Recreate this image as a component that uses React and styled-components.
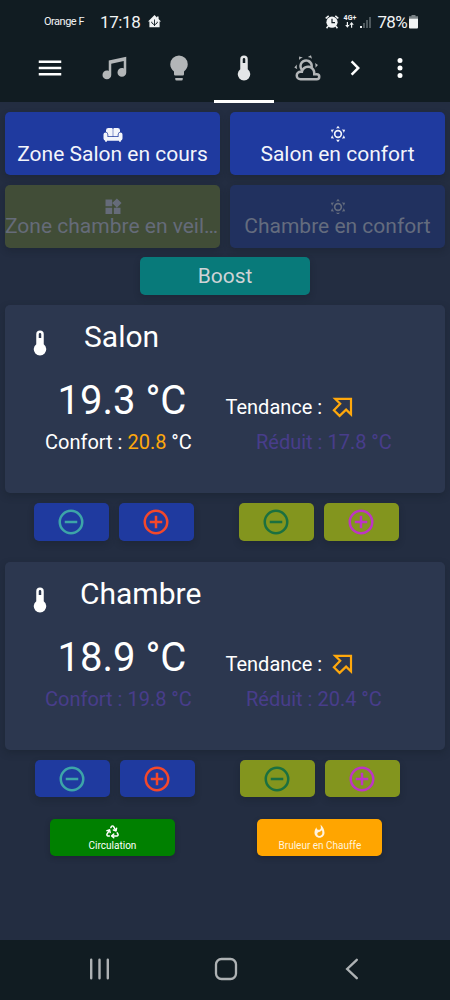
import React from 'react';
import styled, { createGlobalStyle } from 'styled-components';
import { MdWhatshot } from 'react-icons/md';
import { Recycle } from 'lucide-react';

const GlobalStyle = createGlobalStyle`
  * { box-sizing: border-box; }
  body { margin: 0; background: #232d41; font-family: Roboto, "Liberation Sans", sans-serif; }
  svg { display: block; flex: none; }
`;

const paths = {
  thermometer: 'M15 13V5A3 3 0 0 0 9 5V13A5 5 0 1 0 15 13M12 4A1 1 0 0 1 13 5V8H11V5A1 1 0 0 1 12 4Z',
  menu: 'M3,6H21V8H3V6M3,11H21V13H3V11M3,16H21V18H3V16Z',
  music: 'M21,3V15.5A3.5,3.5 0 0,1 17.5,19A3.5,3.5 0 0,1 14,15.5A3.5,3.5 0 0,1 17.5,12C18.04,12 18.55,12.12 19,12.34V6.47L9,8.6V17.5A3.5,3.5 0 0,1 5.5,21A3.5,3.5 0 0,1 2,17.5A3.5,3.5 0 0,1 5.5,14C6.04,14 6.55,14.12 7,14.34V6L21,3Z',
  bulb: 'M12,2A7,7 0 0,0 5,9C5,11.38 6.19,13.47 8,14.74V17A1,1 0 0,0 9,18H15A1,1 0 0,0 16,17V14.74C17.81,13.47 19,11.38 19,9A7,7 0 0,0 12,2M9,21A1,1 0 0,0 10,22H14A1,1 0 0,0 15,21V20H9V21Z',
  weather: 'M12.74,5.47C15.1,6.5 16.35,9.03 15.92,11.46C17.19,12.56 18,14.19 18,16V16.17C18.31,16.06 18.65,16 19,16A3,3 0 0,1 22,19A3,3 0 0,1 19,22H6A4,4 0 0,1 2,18A4,4 0 0,1 6,14H6.27C5,12.45 4.6,10.24 5.5,8.26C6.72,5.5 9.97,4.24 12.74,5.47M11.93,7.3C10.16,6.5 8.09,7.31 7.31,9.07C6.85,10.09 6.93,11.22 7.41,12.13C8.5,10.83 10.16,10 12,10C12.7,10 13.38,10.12 14,10.34C13.94,9.06 13.18,7.86 11.93,7.3M13.55,3.64C13,3.4 12.45,3.23 11.88,3.12L14.37,1.82L15.27,4.71C14.76,4.29 14.19,3.93 13.55,3.64M6.09,4.44C5.6,4.79 5.17,5.19 4.8,5.63L4.91,2.82L7.87,3.5C7.25,3.71 6.65,4.03 6.09,4.44M18,9.71C17.91,9.12 17.78,8.55 17.59,8L19.97,9.5L17.92,11.73C18.03,11.08 18.05,10.4 18,9.71M3.04,11.3C3.11,11.9 3.24,12.47 3.43,13L1.06,11.5L3.1,9.28C3,9.93 2.97,10.61 3.04,11.3M19,18H16V16A4,4 0 0,0 12,12A4,4 0 0,0 8,16H6A2,2 0 0,0 4,18A2,2 0 0,0 6,20H19A1,1 0 0,0 20,19A1,1 0 0,0 19,18Z',
  chevron: 'M8.59,16.58L13.17,12L8.59,7.41L10,6L16,12L10,18L8.59,16.58Z',
  dots: 'M12,16A2,2 0 0,1 14,18A2,2 0 0,1 12,20A2,2 0 0,1 10,18A2,2 0 0,1 12,16M12,10A2,2 0 0,1 14,12A2,2 0 0,1 12,14A2,2 0 0,1 10,12A2,2 0 0,1 12,10M12,4A2,2 0 0,1 14,6A2,2 0 0,1 12,8A2,2 0 0,1 10,6A2,2 0 0,1 12,4Z',
  sofa: 'M6.5,4.7H10A1.6,1.6 0 0,1 11.7,6.3V14.7H6.3V12.2A4,4 0 0,0 3.6,9.2V7.6A2.9,2.9 0 0,1 6.5,4.7M14,4.7H17.5A2.9,2.9 0 0,1 20.4,7.6V9.2A4,4 0 0,0 17.7,12.2V14.7H12.3V6.3A1.6,1.6 0 0,1 14,4.7M3,10.2A2.4,2.4 0 0,1 5.4,12.6V15.5H18.6V12.6A2.4,2.4 0 0,1 23.4,12.6V17.5A2.6,2.6 0 0,1 21.4,20V21.2H19.3V20H4.7V21.2H2.6V20A2.6,2.6 0 0,1 0.6,17.5V12.6A2.4,2.4 0 0,1 3,10.2Z',
  widgets: 'M3,3H11V11H3V3M16.66,1.69L22.31,7.34L16.66,13L11,7.34L16.66,1.69M13,13H21V21H13V13M3,13H11V21H3V13Z',
  sun: 'M12,7A5,5 0 0,1 17,12A5,5 0 0,1 12,17A5,5 0 0,1 7,12A5,5 0 0,1 12,7M12,9A3,3 0 0,0 9,12A3,3 0 0,0 12,15A3,3 0 0,0 15,12A3,3 0 0,0 12,9M12,2L14.39,5.42C13.65,5.15 12.84,5 12,5C11.16,5 10.35,5.15 9.61,5.42L12,2M3.34,7L7.5,6.65C6.9,7.16 6.36,7.78 5.94,8.5C5.5,9.24 5.25,10 5.11,10.79L3.34,7M3.36,17L5.12,13.23C5.26,14 5.53,14.78 5.95,15.5C6.37,16.24 6.91,16.86 7.5,17.37L3.36,17M20.65,7L18.88,10.79C18.74,10 18.47,9.23 18.05,8.5C17.63,7.78 17.1,7.15 16.5,6.64L20.65,7M20.64,17L16.5,17.36C17.09,16.85 17.62,16.22 18.04,15.5C18.46,14.77 18.73,14 18.87,13.21L20.64,17M12,22L9.59,18.56C10.33,18.83 11.14,19 12,19C12.82,19 13.63,18.83 14.37,18.56L12,22Z',
  minus: 'M12,20C7.59,20 4,16.41 4,12C4,7.59 7.59,4 12,4C16.41,4 20,7.59 20,12C20,16.41 16.41,20 12,20M12,2A10,10 0 0,0 2,12A10,10 0 0,0 12,22A10,10 0 0,0 22,12A10,10 0 0,0 12,2M7,13H17V11H7',
  plus: 'M12,20C7.59,20 4,16.41 4,12C4,7.59 7.59,4 12,4C16.41,4 20,7.59 20,12C20,16.41 16.41,20 12,20M12,2A10,10 0 0,0 2,12A10,10 0 0,0 12,22A10,10 0 0,0 22,12A10,10 0 0,0 12,2M13,7H11V11H7V13H11V17H13V13H17V11H13V7Z',
};

const Icon = ({ name, size = 30, color = 'currentColor' }) => (
  <svg width={size} height={size} viewBox="0 0 24 24" fill={color}>
    <path d={paths[name]} />
  </svg>
);

const Screen = styled.div`
  width: 450px;
  height: 1000px;
  display: flex;
  flex-direction: column;
  overflow: hidden;
  background: #232d41;
  color: #fff;
`;

const Header = styled.header`
  height: 102px;
  flex: none;
  background: #111c22;
`;

const StatusBar = styled.div`
  height: 43px;
  padding: 0 32px 0 44px;
  display: flex;
  align-items: center;
  color: #f1f3f4;
`;

const Carrier = styled.span`
  width: 56px;
  font-size: 11px;
  letter-spacing: -0.5px;
  white-space: nowrap;
`;

const Clock = styled.span`
  width: 48px;
  font-size: 17px;
  letter-spacing: -0.4px;
`;

const StatusRight = styled.div`
  margin-left: auto;
  display: flex;
  align-items: center;
`;

const Network = styled.div`
  width: 14px;
  margin-left: 4px;
  display: flex;
  flex-direction: column;
  align-items: center;
  font-size: 7px;
  line-height: 7px;
  font-weight: 700;
`;

const Signal = styled.div`
  margin-left: 3px;
  height: 13px;
  display: flex;
  align-items: flex-end;
  gap: 1.3px;
`;

const SignalBar = styled.i`
  width: 1.9px;
  height: ${(p) => p.$h}px;
  background: ${(p) => (p.$on ? '#f1f3f4' : '#4f595e')};
`;

const Percent = styled.span`
  margin: 0 2px 0 6px;
  font-size: 17px;
  letter-spacing: -0.65px;
`;

const Tabs = styled.nav`
  height: 60px;
  padding-left: 18px;
  display: flex;
`;

const Tab = styled.div`
  width: ${(p) => p.$w || 64.5}px;
  height: 59.5px;
  padding-top: 9.5px;
  display: flex;
  justify-content: center;
  color: ${(p) => (p.$dim ? '#b3b6b8' : '#fff')};
`;

const ActiveTab = styled(Tab)`
  width: 60px;
  margin: 0 2.25px;
  border-bottom: 3px solid #fff;
  color: #e4e6e7;
`;

const Main = styled.main`
  flex: 1;
  padding: 10px 5px 0;
  display: flex;
  flex-direction: column;
`;

const Zones = styled.div`
  display: grid;
  grid-template-columns: 215px 215px;
  grid-auto-rows: 62.75px;
  gap: 10px;
`;

const ZoneButton = styled.div`
  padding-top: 12px;
  border-radius: 5px;
  overflow: hidden;
  display: flex;
  flex-direction: column;
  align-items: center;
  background: ${(p) => p.$bg};
  color: ${(p) => p.$fg || '#f3f5fb'};
  box-shadow: 0 3px 6px rgba(20, 28, 36, 0.3);
`;

const IconClip = styled.div`
  height: 17.6px;
  padding-top: 0.2px;
  flex: none;
  overflow: hidden;
`;

const ZoneLabel = styled.div`
  width: 100%;
  height: 24px;
  font-size: 21px;
  line-height: 24px;
  text-align: center;
  white-space: nowrap;
  overflow: hidden;
  text-overflow: ellipsis;
`;

const Boost = styled.div`
  width: 170px;
  height: 37.5px;
  margin: 9.75px auto 10px;
  padding-top: 1px;
  flex: none;
  border-radius: 5px;
  background: #087a7a;
  color: #cfd3d6;
  font-size: 21px;
  line-height: 37px;
  text-align: center;
  box-shadow: 0 3px 6px rgba(20, 28, 36, 0.3);
`;

const Card = styled.section`
  height: 188px;
  flex: none;
  padding: 12px 0 0 20px;
  border-radius: 5px;
  background: #2c374f;
  box-shadow: 0 3px 7px rgba(20, 28, 36, 0.35);
`;

const CardHead = styled.div`
  height: 40px;
  display: flex;
`;

const CardIcon = styled.div`
  padding-top: 11px;
`;

const Title = styled.h2`
  margin: 0 0 0 ${(p) => p.$gap}px;
  font-size: 30px;
  line-height: 40px;
  font-weight: 400;
`;

const Reading = styled.div`
  height: 50px;
  margin-top: 19.4px;
  padding-left: 32.5px;
  display: flex;
  align-items: baseline;
  line-height: 50px;
`;

const Temperature = styled.div`
  width: 168px;
  font-size: 40px;
`;

const Trend = styled.div`
  display: flex;
  align-items: center;
  gap: 9px;
  font-size: 20px;
  line-height: 24px;
`;

const Targets = styled.div`
  height: 30px;
  margin-top: 0.6px;
  padding-left: 20px;
  display: flex;
  font-size: 20px;
  line-height: 30px;
`;

const Target = styled.div`
  width: ${(p) => p.$w}px;
  white-space: nowrap;
  color: ${(p) => (p.$active ? '#fff' : '#483d8b')};
`;

const Value = styled.span`
  color: #ffa80c;
`;

const Controls = styled.div`
  height: 37.5px;
  margin: 10.3px 0 ${(p) => p.$after}px ${(p) => p.$left}px;
  flex: none;
  display: flex;
  gap: 45px;
`;

const Pair = styled.div`
  display: flex;
  gap: 10px;
`;

const Step = styled.div`
  width: 75px;
  padding-right: 1px;
  border-radius: 5px;
  display: flex;
  align-items: center;
  justify-content: center;
  background: ${(p) => p.$bg};
  color: ${(p) => p.$fg};
  box-shadow: 0 3px 6px rgba(20, 28, 36, 0.3);
`;

const Statuses = styled.div`
  padding-left: 45px;
  display: flex;
  gap: 82.4px;
`;

const Status = styled.div`
  width: 125px;
  height: 37.7px;
  border-radius: 5px;
  display: flex;
  flex-direction: column;
  align-items: center;
  background: ${(p) => p.$bg};
  font-size: 10px;
  line-height: 12px;
  color: ${(p) => p.$fg || '#fff'};
  box-shadow: 0 2px 5px rgba(20, 28, 36, 0.4);
`;

const StatusIcon = styled.div`
  height: 21px;
  padding-top: 4px;
  display: flex;
  align-items: center;
`;

const NavBar = styled.footer`
  height: 60px;
  flex: none;
  padding: 0 91px 3px 88px;
  display: flex;
  align-items: center;
  justify-content: space-between;
  background: #111c22;
`;

const HomeKey = styled.div`
  margin-right: 5px;
`;

const TrendArrow = () => (
  <svg width="22" height="22" viewBox="0 0 22 22" fill="none" stroke="#ffa80c" strokeWidth="2.2">
    <path d="M4.2 2.9H20V18.3L15.1 13.6L8.6 19.9L2.9 14.2L9.2 7.7Z" />
  </svg>
);

const blue = '#1f3a9f';
const olive = '#83951e';

const RoomCard = ({ name, gap, temp, confort, reduit, active, width }) => (
  <Card>
    <CardHead>
      <CardIcon><Icon name="thermometer" /></CardIcon>
      <Title $gap={gap}>{name}</Title>
    </CardHead>
    <Reading>
      <Temperature>{temp} °C</Temperature>
      <Trend><span>Tendance :</span><TrendArrow /></Trend>
    </Reading>
    <Targets>
      <Target $w={width} $active={active}>
        Confort : {active ? <Value>{confort}</Value> : confort} °C
      </Target>
      <Target>Réduit : {reduit} °C</Target>
    </Targets>
  </Card>
);

const RoomControls = ({ left, after }) => (
  <Controls $left={left} $after={after}>
    <Pair>
      <Step $bg={blue} $fg="#3da5a8"><Icon name="minus" /></Step>
      <Step $bg={blue} $fg="#f4482a"><Icon name="plus" /></Step>
    </Pair>
    <Pair>
      <Step $bg={olive} $fg="#1b7040"><Icon name="minus" /></Step>
      <Step $bg={olive} $fg="#bd35c4"><Icon name="plus" /></Step>
    </Pair>
  </Controls>
);

export default function App() {
  return (
    <Screen>
      <GlobalStyle />
      <Header>
        <StatusBar>
          <Carrier>Orange F</Carrier>
          <Clock>17:18</Clock>
          <svg width="13" height="13" viewBox="0 0 13 13">
            <path d="M6.5 0L9 2.4V1.5H10.6V4L13 6.5H11.6V12.3H1.4V6.5H0Z" fill="#f1f3f4" />
            <path d="M6.5 11V4.5M6.5 10L3.8 8V6.7M6.5 10L9.2 8V6.7" fill="none" stroke="#111c22" strokeWidth=".9" />
          </svg>
          <StatusRight>
            <svg width="14" height="14" viewBox="0 0 14 14">
              <circle cx="7" cy="7.2" r="5.6" fill="#f1f3f4" />
              <path d="M.7 3.4L3.7 .9M13.3 3.4L10.3 .9M3 11.2L1.6 13.2M11 11.2L12.4 13.2" stroke="#f1f3f4" strokeWidth="1.5" />
              <path d="M7 3.8V7.6H10" fill="none" stroke="#111c22" strokeWidth="1.2" />
            </svg>
            <Network>
              <span>4G+</span>
              <svg width="9" height="6" viewBox="0 0 9 6" fill="#f1f3f4">
                <path d="M1.8 0H3V3H4.6L2.4 5.8L.2 3H1.8ZM6 5.8H7.2V2.8H8.8L6.6 0L4.4 2.8H6Z" />
              </svg>
            </Network>
            <Signal>
              <SignalBar $h={2.5} $on /><SignalBar $h={5.5} /><SignalBar $h={8.5} /><SignalBar $h={11.5} />
            </Signal>
            <Percent>78%</Percent>
            <svg width="9" height="14" viewBox="0 0 9 14">
              <path d="M2.5 0H6.5V1.3H9V3.6H0V1.3H2.5Z" fill="#7a8286" />
              <path d="M0 3.4H9V12.5Q9 13.5 8 13.5H1Q0 13.5 0 12.5Z" fill="#f1f3f4" />
            </svg>
          </StatusRight>
        </StatusBar>
        <Tabs>
          <Tab><Icon name="menu" /></Tab>
          <Tab $dim><Icon name="music" /></Tab>
          <Tab $dim><Icon name="bulb" /></Tab>
          <ActiveTab><Icon name="thermometer" /></ActiveTab>
          <Tab $dim><Icon name="weather" /></Tab>
          <Tab $w={28}><Icon name="chevron" /></Tab>
          <Tab $w={62}><Icon name="dots" /></Tab>
        </Tabs>
      </Header>
      <Main>
        <Zones>
          <ZoneButton $bg={blue}>
            <IconClip><Icon name="sofa" size={20} /></IconClip>
            <ZoneLabel>Zone Salon en cours</ZoneLabel>
          </ZoneButton>
          <ZoneButton $bg={blue}>
            <IconClip><Icon name="sun" size={20} /></IconClip>
            <ZoneLabel>Salon en confort</ZoneLabel>
          </ZoneButton>
          <ZoneButton $bg="#414d37" $fg="#656b79">
            <IconClip><Icon name="widgets" size={20} /></IconClip>
            <ZoneLabel>Zone chambre en veille</ZoneLabel>
          </ZoneButton>
          <ZoneButton $bg="#21315f" $fg="#646c7e">
            <IconClip><Icon name="sun" size={20} /></IconClip>
            <ZoneLabel>Chambre en confort</ZoneLabel>
          </ZoneButton>
        </Zones>
        <Boost>Boost</Boost>
        <RoomCard name="Salon" gap={29} temp="19.3" confort="20.8" reduit="17.8" active width={211} />
        <RoomControls left={29} after={21} />
        <RoomCard name="Chambre" gap={25} temp="18.9" confort="19.8" reduit="20.4" width={201} />
        <RoomControls left={30} after={21.2} />
        <Statuses>
          <Status $bg="#008000">
            <StatusIcon><Recycle size={15} strokeWidth={2.4} /></StatusIcon>
            Circulation
          </Status>
          <Status $bg="#ffa500" $fg="#fff3dc">
            <StatusIcon><MdWhatshot size={15} /></StatusIcon>
            Bruleur en Chauffe
          </Status>
        </Statuses>
      </Main>
      <NavBar>
        <svg width="23" height="22" viewBox="0 0 23 22" stroke="#aeb2b4" strokeWidth="2.4" strokeLinecap="round">
          <path d="M3.2 1.8V20.2M11.5 1.8V20.2M19.8 1.8V20.2" />
        </svg>
        <HomeKey>
          <svg width="24" height="24" viewBox="0 0 24 24" fill="none" stroke="#aeb2b4" strokeWidth="2.3">
            <rect x="2" y="2" width="20" height="20" rx="5.5" />
          </svg>
        </HomeKey>
        <svg width="14" height="22" viewBox="0 0 14 22" fill="none" stroke="#aeb2b4" strokeWidth="2.4" strokeLinecap="round">
          <path d="M11.8 1.8L2.2 11L11.8 20.2" />
        </svg>
      </NavBar>
    </Screen>
  );
}
